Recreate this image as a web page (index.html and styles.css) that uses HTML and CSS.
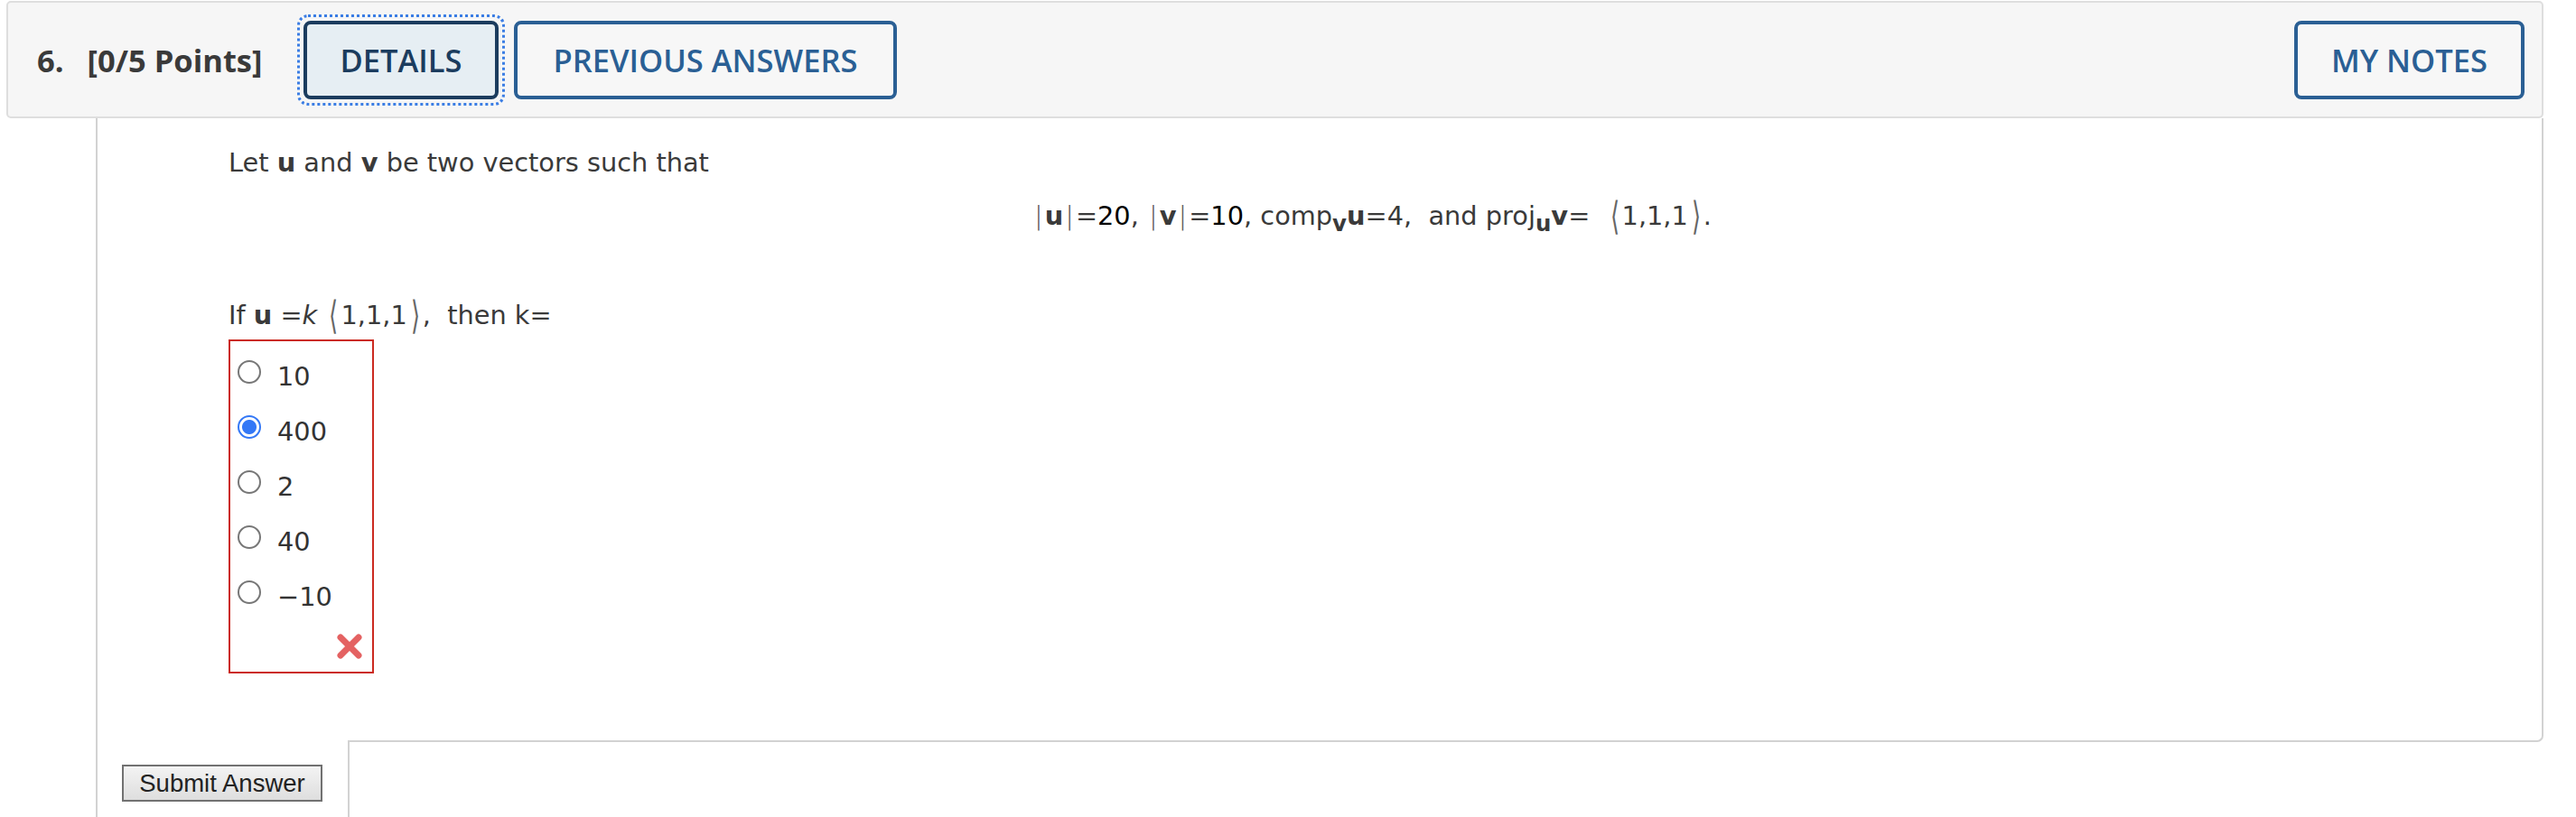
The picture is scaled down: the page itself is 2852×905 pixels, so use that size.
FILE: index.html
```html
<!DOCTYPE html>
<html lang="en">
<head>
<meta charset="utf-8">
<title>Question 6</title>
<link rel="stylesheet" href="styles.css">
</head>
<body>
<div class="page">
  <div class="header">
    <div class="title"><span class="num">6.</span><span class="pts">[0/5 Points]</span></div>
    <button class="hbtn details">DETAILS</button>
    <button class="hbtn prev">PREVIOUS ANSWERS</button>
    <button class="hbtn notes">MY NOTES</button>
  </div>
  <div class="qbody">
    <p class="line1">Let <b>u</b> and <b>v</b> be two vectors such that</p>
    <p class="formula"><span class="bar">|</span><b>u</b><span class="bar">|</span>=<span class="blk">20</span>, <span class="bar">|</span><b>v</b><span class="bar">|</span>=<span class="blk">10</span>, comp<sub>v</sub><b>u</b>=4,&nbsp; and proj<sub>u</sub><b>v</b>=&nbsp; <span class="ang">⟨</span>1,1,1<span class="ang">⟩</span>.</p>
    <p class="line3">If <b>u</b> =<i>k</i> <span class="ang">⟨</span>1,1,1<span class="ang">⟩</span>,&nbsp; then k=</p>
    <div class="answers">
      <label class="opt"><input type="radio" name="k"><span class="lbl">10</span></label>
      <label class="opt"><input type="radio" name="k" checked><span class="lbl">400</span></label>
      <label class="opt"><input type="radio" name="k"><span class="lbl">2</span></label>
      <label class="opt"><input type="radio" name="k"><span class="lbl">40</span></label>
      <label class="opt"><input type="radio" name="k"><span class="lbl">−10</span></label>
      <div class="mark">
        <svg width="30" height="30" viewBox="0 0 30 30"><path d="M5 5 L25 25 M25 5 L5 25" stroke="#e46262" stroke-width="7" stroke-linecap="round" fill="none"/></svg>
      </div>
    </div>
  </div>
  <div class="tab"><button class="submit">Submit Answer</button></div>
</div>
</body>
</html>
```

FILE: styles.css
```css
html, body {
  margin: 0;
  padding: 0;
  background: #fff;
  overflow: hidden;
}

.page {
  padding-top: 1px;
  margin-left: 7px;
  width: 2809px;
}

.header {
  box-sizing: border-box;
  height: 130px;
  border: 2px solid #dedede;
  border-radius: 5px;
  background: #f6f6f6;
  display: flex;
  align-items: center;
  padding: 0 19px 0 32px;
}

.title {
  font-family: "Open Sans", sans-serif;
  font-weight: 700;
  font-size: 34.5px;
  color: #3a3a3a;
  margin-right: 46px;
  white-space: nowrap;
}

.title .num {
  margin-right: 26px;
}

.hbtn {
  box-sizing: border-box;
  height: 87px;
  padding: 0 37px;
  border: 4px solid #2a5f94;
  border-radius: 8px;
  background: #f7f7f7;
  color: #2a5f94;
  font-family: "Open Sans", sans-serif;
  font-weight: 600;
  font-size: 34.5px;
  white-space: nowrap;
  margin-right: 17px;
  position: relative;
}

.hbtn.prev {
  padding: 0 40px;
}

.hbtn.details {
  border-color: #1b3c5e;
  color: #1b3c5e;
  background: #e6eef3;
  padding: 0 36px;
}

.hbtn.details::after {
  content: "";
  position: absolute;
  inset: -11px;
  border: 3px dotted #3a7de4;
  border-radius: 12px;
  pointer-events: none;
}

.hbtn.notes {
  margin-left: auto;
  margin-right: 0;
}

.qbody {
  margin-left: 99px;
  box-sizing: border-box;
  width: 2710px;
  border-left: 2px solid #d2d2d2;
  border-right: 2px solid #d2d2d2;
  border-bottom: 2px solid #d2d2d2;
  border-bottom-right-radius: 7px;
  padding: 28px 29px 74px 145px;
  font-family: "DejaVu Sans", Verdana, sans-serif;
  font-size: 28.8px;
  line-height: 43px;
  color: #3a3a3a;
}

.qbody p {
  margin: 0;
}

.formula {
  margin-top: 16px !important;
  text-align: center;
}

.formula .bar {
  color: #555;
  font-weight: 300;
  margin: 0 2px;
}

.formula .blk {
  color: #000;
}

.formula sub {
  font-size: 0.85em;
  font-weight: 700;
  vertical-align: -0.28em;
  line-height: 0;
}

.ang {
  display: inline-block;
  color: #666;
  transform: scale(0.9, 1.5);
  font-weight: 300;
  margin: 0 3px;
}

.line3 {
  margin-top: 67px !important;
}

.answers {
  box-sizing: border-box;
  width: 161px;
  margin-top: 5px;
  border: 2px solid #cb2a20;
  padding: 3px 10px 13px 8px;
  display: flex;
  flex-direction: column;
}

.opt {
  height: 61px;
  display: flex;
  align-items: center;
  gap: 18px;
}

.opt input {
  appearance: none;
  -webkit-appearance: none;
  box-sizing: border-box;
  width: 26px;
  height: 26px;
  margin: 0;
  border: 2px solid #777;
  border-radius: 50%;
  background: #fff;
  flex: none;
}

.opt input:checked {
  border-color: #3478f6;
  background: radial-gradient(circle, #3478f6 0 7.5px, #fff 8.5px);
}

.opt .lbl {
  padding-top: 10px;
  line-height: 40px;
  color: #333;
}

.mark {
  margin-top: 15px;
  height: 30px;
  display: flex;
  justify-content: flex-end;
}

.mark svg {
  display: block;
}

.tab {
  margin-left: 99px;
  margin-top: -2px;
  box-sizing: border-box;
  width: 281px;
  height: 110px;
  background: #fff;
  border-left: 2px solid #d2d2d2;
  border-right: 2px solid #d2d2d2;
  padding: 27px 0 0 27px;
  position: relative;
}

.submit {
  box-sizing: border-box;
  width: 222px;
  height: 41px;
  padding: 0;
  border: 2px solid #717171;
  background: linear-gradient(#f3f3f3, #dedede);
  font-family: "Liberation Sans", Arial, sans-serif;
  font-size: 27.5px;
  color: #222;
  border-radius: 0;
}
```
